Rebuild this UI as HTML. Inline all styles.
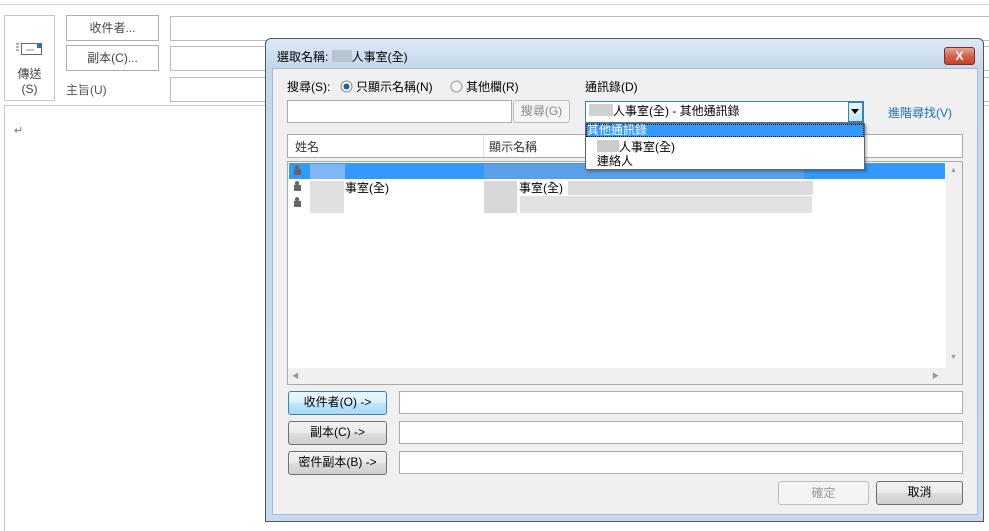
<!DOCTYPE html>
<html style="width:989px;height:531px;overflow:hidden"><head><meta charset="utf-8"><style>
*{box-sizing:border-box;margin:0;padding:0}
body{width:989px;height:531px;position:relative;background:#fff;overflow:hidden;font-family:"Liberation Sans","Noto Sans CJK TC",sans-serif;font-size:12px;color:#222}
.a{position:absolute}
.btn{position:absolute;border:1px solid #adadad;background:#fff;text-align:center;color:#444}
.inp{position:absolute;border:1px solid #abadb3;background:#fff}
.wb{position:absolute;border:1px solid #707070;border-radius:3px;background:linear-gradient(#f2f2f2,#ebebeb 50%,#dddddd 51%,#cfcfcf);text-align:center;line-height:21px;color:#000}
.blur{position:absolute;background:#cfcfcf}
</style></head><body>
<div class="a" style="left:0;top:4px;width:989px;height:1px;background:#d6d6d6"></div>
<div class="a" style="left:4px;top:15px;width:51px;height:86px;border:1px solid #c6c6c6"></div>
<svg class="a" style="left:15px;top:42px" width="28" height="14"><path d="M1 2h3M1 5h3M1 8h3" stroke="#666"/><rect x="6.5" y="1.5" width="20" height="11" fill="#fff" stroke="#666"/><path d="M11 8h8" stroke="#888"/><rect x="22" y="2" width="4" height="4" fill="#2a6fc0"/></svg>
<div class="a" style="left:4px;top:67px;width:51px;text-align:center;line-height:15px;color:#444">傳送<br>(S)</div>
<div class="btn" style="left:66px;top:15px;width:93px;height:26px;line-height:24px">收件者...</div>
<div class="btn" style="left:66px;top:45px;width:93px;height:26px;line-height:24px">副本(C)...</div>
<div class="a" style="left:66px;top:81px;color:#555">主旨(U)</div>
<div class="inp" style="left:170px;top:16px;width:830px;height:25px;border-color:#bbb"></div>
<div class="inp" style="left:170px;top:46px;width:830px;height:25px;border-color:#bbb"></div>
<div class="inp" style="left:170px;top:77px;width:830px;height:25px;border-color:#bbb"></div>
<div class="a" style="left:4px;top:105px;width:990px;height:440px;border:1px solid #c6c6c6"></div>
<div class="a" style="left:14px;top:124px;color:#777;font-size:11px">↵</div>

<div class="a" style="left:265px;top:38px;width:719px;height:484px;border:1px solid #555;border-radius:6px 6px 0 0;background:linear-gradient(#dde9f6,#c5d7ec 30px,#c7daef);"></div>
<div class="a" style="left:277px;top:48px;color:#000">選取名稱: <span style="display:inline-block;width:20px;height:12px;background:#b8c4d0;vertical-align:-1px"></span>人事室(全)</div>
<div class="a" style="left:944px;top:47px;width:31px;height:18px;border:1px solid #7a3028;border-radius:3px;background:linear-gradient(#e8a593,#d3634c 50%,#c1432c);color:#fff;text-align:center;font-weight:bold;line-height:16px;font-size:12px">X</div>
<div class="a" style="left:272px;top:68px;width:706px;height:447px;background:#f0f0f0;border:1px solid #a8bbd2"></div>

<div class="a" style="left:287px;top:78px;color:#000">搜尋(S):</div>
<svg class="a" style="left:340px;top:80px" width="13" height="13"><circle cx="6.5" cy="6.5" r="5.5" fill="#fff" stroke="#8a8a8a"/><circle cx="6.5" cy="6.5" r="3" fill="#1e5fa8"/></svg>
<div class="a" style="left:356px;top:78px;color:#000">只顯示名稱(N)</div>
<svg class="a" style="left:450px;top:80px" width="13" height="13"><circle cx="6.5" cy="6.5" r="5.5" fill="#f4f4f4" stroke="#9a9a9a"/></svg>
<div class="a" style="left:466px;top:78px;color:#000">其他欄(R)</div>
<div class="a" style="left:585px;top:78px;color:#000">通訊錄(D)</div>
<div class="inp" style="left:287px;top:100px;width:225px;height:23px"></div>
<div class="a" style="left:513px;top:100px;width:57px;height:23px;border:1px solid #bdbdbd;border-radius:3px;background:#f4f4f4;color:#888;text-align:center;line-height:21px">搜尋(G)</div>
<div class="inp" style="left:585px;top:101px;width:279px;height:22px;border-color:#3c7fb1;color:#000;padding-left:3px;line-height:19px"><span style="display:inline-block;width:24px;height:12px;background:#d0d0d0;vertical-align:-1px"></span>人事室(全) - 其他通訊錄</div>
<div class="a" style="left:848px;top:102px;width:15px;height:20px;border:1px solid #3c7fb1;background:linear-gradient(#eaf6fd,#bee6fd)"></div>
<svg class="a" style="left:851px;top:109px" width="9" height="6"><path d="M0 0h8L4 5z" fill="#000"/></svg>
<div class="a" style="left:888px;top:104px;color:#1a6fb5">進階尋找(V)</div>

<div class="a" style="left:287px;top:134px;width:676px;height:24px;border:1px solid #aaa;background:#fff"></div>
<div class="a" style="left:295px;top:138px;color:#333">姓名</div>
<div class="a" style="left:483px;top:135px;width:1px;height:22px;background:#e0e0e0"></div>
<div class="a" style="left:489px;top:138px;color:#333">顯示名稱</div>
<div class="a" style="left:287px;top:161px;width:676px;height:224px;border:1px solid #aaa;background:#fff"></div>
<div class="a" style="left:289px;top:163px;width:656px;height:16px;background:#3399ff"></div>
<div class="blur" style="left:310px;top:164px;width:35px;height:15px;background:#7fb7f5"></div>
<div class="blur" style="left:484px;top:164px;width:320px;height:15px;background:#5a9fe8"></div>
<div class="a" style="left:345px;top:179px;color:#000">事室(全)</div>
<div class="blur" style="left:310px;top:181px;width:34px;height:32px;background:#e0e0e0"></div>
<div class="blur" style="left:484px;top:181px;width:33px;height:32px;background:#d8d8d8"></div>
<div class="a" style="left:519px;top:179px;color:#000">事室(全)</div>
<div class="blur" style="left:568px;top:181px;width:245px;height:14px;background:#dcdcdc"></div>
<div class="blur" style="left:520px;top:196px;width:292px;height:17px;background:#e2e2e2"></div>
<div class="a" style="left:294px;top:164px;color:#666;font-size:10px;line-height:8px">●<br>▀</div>
<div class="a" style="left:294px;top:180px;color:#666;font-size:10px;line-height:8px">●<br>▀</div>
<div class="a" style="left:294px;top:196px;color:#666;font-size:10px;line-height:8px">●<br>▀</div>
<div class="a" style="left:946px;top:162px;width:16px;height:206px;background:#f0f0f0"></div>
<div class="a" style="left:288px;top:368px;width:674px;height:16px;background:#f0f0f0"></div>
<div class="a" style="left:950px;top:167px;color:#999;font-size:7px">▲</div>
<div class="a" style="left:950px;top:354px;color:#999;font-size:7px">▼</div>
<div class="a" style="left:292px;top:371px;color:#999;font-size:7px">◀</div>
<div class="a" style="left:932px;top:371px;color:#999;font-size:7px">▶</div>

<div class="a" style="left:585px;top:123px;width:280px;height:47px;border:1px solid #646464;background:#fff;box-shadow:2px 2px 2px rgba(0,0,0,.25)"></div>
<div class="a" style="left:586px;top:124px;width:278px;height:13px;background:#3399ff;border:1px dotted #000;color:#fff;line-height:11px">其他通訊錄</div>
<div class="a" style="left:597px;top:138px;color:#000"><span style="display:inline-block;width:22px;height:12px;background:#ccc;vertical-align:-1px"></span>人事室(全)</div>
<div class="a" style="left:597px;top:152px;color:#000">連絡人</div>

<div class="wb" style="left:288px;top:391px;width:99px;height:24px;border-color:#3c7fb1;background:linear-gradient(#eaf6fd,#d9f0fc 50%,#bee6fd 51%,#a7d9f5)">收件者(O) -&gt;</div>
<div class="wb" style="left:288px;top:421px;width:99px;height:24px">副本(C) -&gt;</div>
<div class="wb" style="left:288px;top:451px;width:99px;height:24px">密件副本(B) -&gt;</div>
<div class="inp" style="left:399px;top:391px;width:564px;height:23px"></div>
<div class="inp" style="left:399px;top:421px;width:564px;height:23px"></div>
<div class="inp" style="left:399px;top:451px;width:564px;height:23px"></div>
<div class="a" style="left:778px;top:481px;width:91px;height:24px;border:1px solid #bdbdbd;border-radius:3px;background:#f4f4f4;color:#999;text-align:center;line-height:22px">確定</div>
<div class="wb" style="left:876px;top:481px;width:87px;height:24px">取消</div>
</body></html>
